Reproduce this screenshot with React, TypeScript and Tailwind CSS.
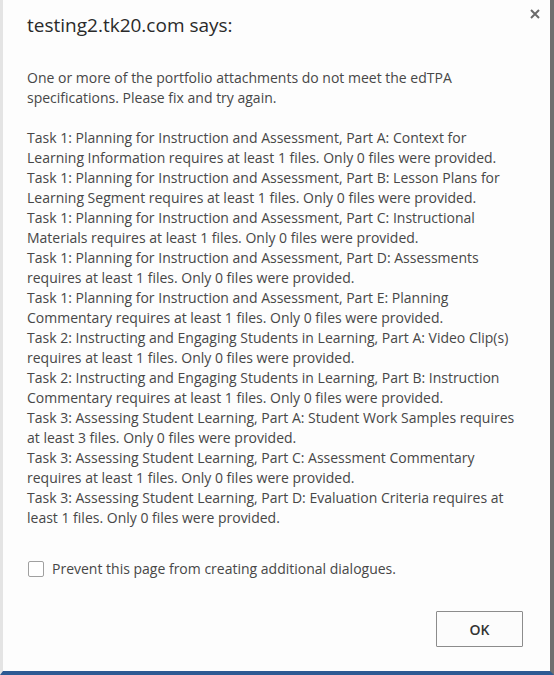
const intro = [
  'One or more of the portfolio attachments do not meet the edTPA',
  'specifications. Please fix and try again.',
];

const tasks = [
  'Task 1: Planning for Instruction and Assessment, Part A: Context for',
  'Learning Information requires at least 1 files. Only 0 files were provided.',
  'Task 1: Planning for Instruction and Assessment, Part B: Lesson Plans for',
  'Learning Segment requires at least 1 files. Only 0 files were provided.',
  'Task 1: Planning for Instruction and Assessment, Part C: Instructional',
  'Materials requires at least 1 files. Only 0 files were provided.',
  'Task 1: Planning for Instruction and Assessment, Part D: Assessments',
  'requires at least 1 files. Only 0 files were provided.',
  'Task 1: Planning for Instruction and Assessment, Part E: Planning',
  'Commentary requires at least 1 files. Only 0 files were provided.',
  'Task 2: Instructing and Engaging Students in Learning, Part A: Video Clip(s)',
  'requires at least 1 files. Only 0 files were provided.',
  'Task 2: Instructing and Engaging Students in Learning, Part B: Instruction',
  'Commentary requires at least 1 files. Only 0 files were provided.',
  'Task 3: Assessing Student Learning, Part A: Student Work Samples requires',
  'at least 3 files. Only 0 files were provided.',
  'Task 3: Assessing Student Learning, Part C: Assessment Commentary',
  'requires at least 1 files. Only 0 files were provided.',
  'Task 3: Assessing Student Learning, Part D: Evaluation Criteria requires at',
  'least 1 files. Only 0 files were provided.',
];

export default function App() {
  return (
    <div
      className="w-[554px] h-[675px] flex flex-col bg-[#fdfdfd] border-l-[3px] border-l-[#e4e4e4] border-r-4 border-r-[#6f6f6f] border-b-4 border-b-[#2d5a93] text-[#474747]"
      style={{ fontFamily: '"Open Sans", "Noto Sans", sans-serif' }}
    >
      <div className="flex items-start justify-between pl-[24px] pr-[10px] pt-[11px]">
        <h1 className="text-[19px] leading-[28px] text-[#2a2a2a]">testing2.tk20.com says:</h1>
        <svg width="10" height="10" viewBox="0 0 10 10" className="-mt-[2px]">
          <path d="M1 1L9 9M9 1L1 9" stroke="#6a6a6a" strokeWidth="2" />
        </svg>
      </div>

      <div className="pl-[24px] pt-[29px] text-[14px] leading-[20px]">
        {intro.map((line) => (
          <div key={line} className="whitespace-nowrap">{line}</div>
        ))}
        <div className="h-[20px]" />
        {tasks.map((line, i) => (
          <div key={i} className="whitespace-nowrap">{line}</div>
        ))}
      </div>

      <label className="flex items-center gap-[8px] pl-[25px] mt-[31px] text-[14px] leading-[20px]">
        <span className="w-[16px] h-[16px] border border-[#a0a0a0] rounded-[2px] bg-white" />
        <span>Prevent this page from creating additional dialogues.</span>
      </label>

      <div className="flex justify-end pr-[27px] mt-[32px]">
        <button className="w-[87px] h-[36px] border border-[#8c8c8c] rounded-[1px] bg-[#fcfcfc] text-[14px] font-semibold text-[#333]">
          OK
        </button>
      </div>
    </div>
  );
}
